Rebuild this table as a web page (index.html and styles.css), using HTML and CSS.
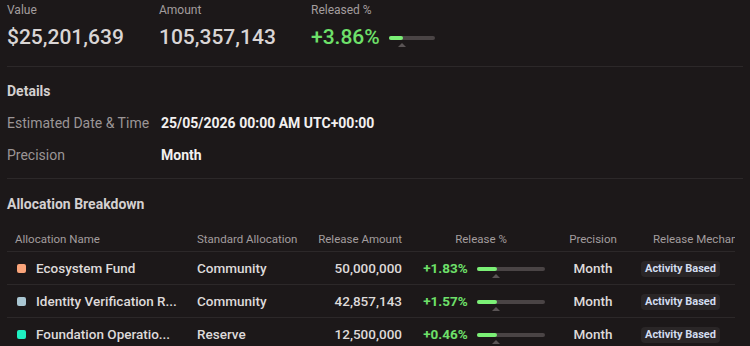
FILE: index.html
```html
<!DOCTYPE html>
<html>
<head>
<meta charset="utf-8">
<link rel="stylesheet" href="styles.css">
</head>
<body>
<div class="page">
  <div class="stats">
    <div class="stat">
      <div class="stat-label">Value</div>
      <div class="stat-value">$25,201,639</div>
    </div>
    <div class="stat">
      <div class="stat-label">Amount</div>
      <div class="stat-value">105,357,143</div>
    </div>
    <div class="stat">
      <div class="stat-label">Released %</div>
      <div class="stat-value green">+3.86%
        <span class="bar big"><span class="fill" style="width:14px"></span><span class="tick" style="left:14px"></span></span>
      </div>
    </div>
  </div>
  <div class="sep"></div>
  <div class="section-title details-title">Details</div>
  <div class="detail-row"><span class="detail-label">Estimated Date &amp; Time</span><span class="detail-value">25/05/2026 00:00 AM UTC+00:00</span></div>
  <div class="detail-row"><span class="detail-label">Precision</span><span class="detail-value">Month</span></div>
  <div class="sep sep2"></div>
  <div class="section-title alloc-title">Allocation Breakdown</div>
  <div class="table-wrap">
    <table class="tbl">
      <thead>
        <tr>
          <th class="c-name">Allocation Name</th>
          <th class="c-std">Standard Allocation</th>
          <th class="c-amt">Release Amount</th>
          <th class="c-pct">Release %</th>
          <th class="c-prec">Precision</th>
          <th class="c-mech">Release Mechanism</th>
        </tr>
      </thead>
      <tbody>
        <tr>
          <td class="c-name"><span class="dot orange"></span>Ecosystem Fund</td>
          <td class="c-std">Community</td>
          <td class="c-amt">50,000,000</td>
          <td class="c-pct"><span class="pct">+1.83%</span><span class="bar"><span class="fill" style="width:20px"></span><span class="tick" style="left:20px"></span></span></td>
          <td class="c-prec">Month</td>
          <td class="c-mech"><span class="badge">Activity Based</span></td>
        </tr>
        <tr>
          <td class="c-name"><span class="dot blue"></span>Identity Verification R...</td>
          <td class="c-std">Community</td>
          <td class="c-amt">42,857,143</td>
          <td class="c-pct"><span class="pct">+1.57%</span><span class="bar"><span class="fill" style="width:20px"></span><span class="tick" style="left:20px"></span></span></td>
          <td class="c-prec">Month</td>
          <td class="c-mech"><span class="badge">Activity Based</span></td>
        </tr>
        <tr>
          <td class="c-name"><span class="dot teal"></span>Foundation Operatio...</td>
          <td class="c-std">Reserve</td>
          <td class="c-amt">12,500,000</td>
          <td class="c-pct"><span class="pct">+0.46%</span><span class="bar"><span class="fill" style="width:20px"></span><span class="tick" style="left:20px"></span></span></td>
          <td class="c-prec">Month</td>
          <td class="c-mech"><span class="badge">Activity Based</span></td>
        </tr>
      </tbody>
    </table>
  </div>
</div>
</body>
</html>
```

FILE: styles.css
```css
* { box-sizing: border-box; }
html, body { margin: 0; padding: 0; }
body {
  background: #1c1819;
  font-family: Roboto, "Liberation Sans", sans-serif;
  color: #dcd8d8;
  width: 750px;
  height: 346px;
  overflow: hidden;
}
.page { padding: 2px 7px 0 7px; }
.stats { display: flex; }
.stat { width: 152px; }
.stat-label { font-size: 12px; color: #a39d9e; line-height: 17px; }
.stat-value {
  font-size: 21px; font-weight: 500; line-height: 26px; margin-top: 5px; color: #d9d5d5;
  display: flex; align-items: center; white-space: nowrap;
}
.stat-value.green { color: #6ee06a; }
.bar { position: relative; display: inline-block; width: 68px; height: 4px; border-radius: 2px; background: #4a4445; }
.bar.big { width: 46px; margin-left: 9px; margin-top: 2px; }
.bar .fill { position: absolute; left: 0; top: 0; bottom: 0; background: #7bf076; border-radius: 2px; }
.bar .tick {
  position: absolute; top: 7px; width: 0; height: 0;
  border-left: 4px solid transparent; border-right: 4px solid transparent;
  border-bottom: 4px solid #5a5455; margin-left: -5px;
}
.sep { height: 1px; background: #2c2829; margin-top: 16px; }
.section-title { font-size: 14px; font-weight: 700; color: #d4d0d0; line-height: 18px; }
.details-title { margin-top: 15px; }
.detail-row { display: flex; line-height: 18px; margin-top: 14px; font-size: 14px; }
.detail-label { width: 154px; color: #9b9596; }
.detail-value { color: #f2f0f0; font-weight: 700; }
.sep2 { margin-top: 14px; }
.alloc-title { margin-top: 16px; }
.table-wrap { width: 728px; overflow: hidden; margin-top: 14px; }
.tbl { border-collapse: collapse; table-layout: fixed; width: 790px; }
.tbl th {
  font-size: 11.5px; font-weight: 400; color: #a39d9e; height: 24px;
  border-bottom: 1px solid #2c2829; white-space: nowrap; padding: 0;
}
.tbl td {
  font-size: 13.5px; font-weight: 500; height: 33px; border-bottom: 1px solid #2c2829;
  padding: 0; white-space: nowrap; color: #dedada;
}
.c-name { width: 183px; text-align: left; padding-left: 8px !important; }
.c-std { width: 115px; text-align: left; padding-left: 7px !important; }
.c-amt { width: 104px; text-align: right; padding-right: 7px !important; }
.c-pct { width: 150px; text-align: center; }
.c-prec { width: 68px; text-align: center; }
.c-mech { width: 170px; text-align: left; }
th.c-pct { padding-right: 6px !important; }
th.c-mech { padding-left: 26px !important; }
td.c-mech { padding-left: 14px !important; }
td.c-name { padding-left: 10px !important; }
.dot { display: inline-block; width: 9px; height: 9px; border-radius: 2px; margin-right: 10px; }
.orange { background: #f9a47a; }
.blue { background: #a9c6d2; }
.teal { background: #1ef0c1; }
.pct { color: #6ee06a; font-weight: 700; margin-right: 9px; }
td.c-pct .bar { vertical-align: middle; }
.badge {
  display: inline-block; background: #2a2627; border-radius: 4px;
  font-size: 11px; font-weight: 700; color: #d2dcef; padding: 2px 4px; line-height: 12px;
}
```
